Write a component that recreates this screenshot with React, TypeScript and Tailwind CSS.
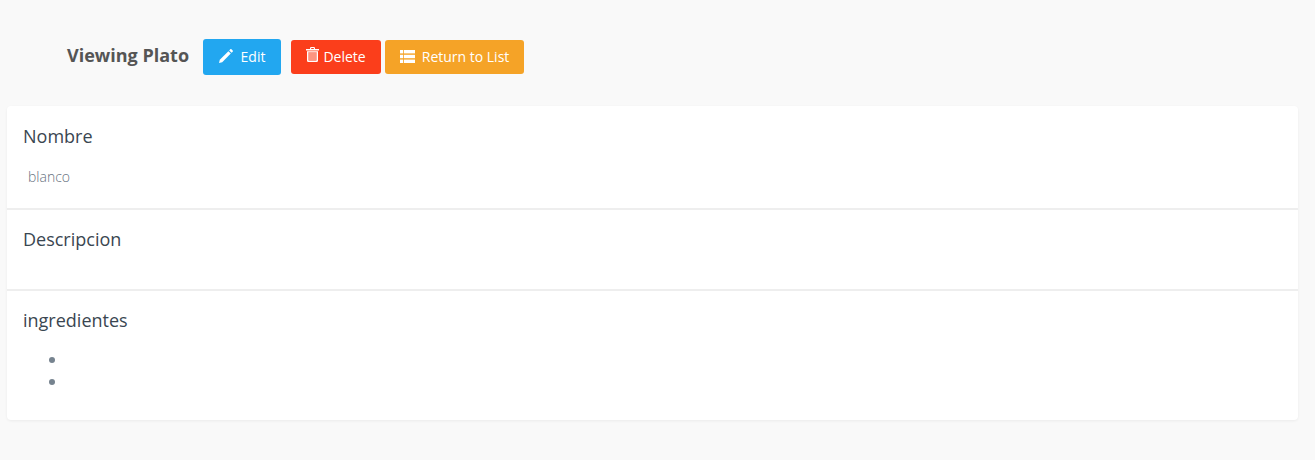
function PencilIcon() {
  return (
    <svg width="16" height="16" viewBox="0 0 16 16" fill="currentColor" className="mr-[7px] -ml-[1px]">
      <path d="M1 15 L1.8 11.8 L10.4 3.2 L12.8 5.6 L4.2 14.2 Z" />
      <path d="M11.2 2.4 L12.2 1.3 Q12.9 0.8 13.5 1.3 L14.7 2.5 Q15.2 3.1 14.7 3.8 L13.6 4.8 Z" />
    </svg>
  );
}

function TrashIcon() {
  return (
    <svg width="13" height="15" viewBox="0 0 13 15" fill="currentColor" className="mr-[4px] -mt-[4px]">
      <path d="M4 2 V1.2 Q4 0 5.2 0 H7.8 Q9 0 9 1.2 V2 H13 V3.6 H0 V2 Z M5.2 2 H7.8 V1.1 H5.2 Z" fillRule="evenodd" />
      <path d="M1 4.2 H12 V13.4 Q12 15 10.6 15 H2.4 Q1 15 1 13.4 Z M2.4 5.2 V13 Q2.4 13.7 3 13.7 H10 Q10.6 13.7 10.6 13 V5.2 Z" fillRule="evenodd" />
      <path d="M2.4 5.2 H10.6 V13.7 H2.4 Z" opacity="0.45" />
    </svg>
  );
}

function ListIcon() {
  return (
    <svg width="15" height="13" viewBox="0 0 15 13" fill="currentColor" className="mr-[7px]">
      <rect x="0" y="0" width="3" height="3.4" />
      <rect x="3.8" y="0" width="11.2" height="3.4" />
      <rect x="0" y="4.8" width="3" height="3.4" />
      <rect x="3.8" y="4.8" width="11.2" height="3.4" />
      <rect x="0" y="9.6" width="3" height="3.4" />
      <rect x="3.8" y="9.6" width="11.2" height="3.4" />
    </svg>
  );
}

export default function App() {
  return (
    <div className="h-[460px] w-[1315px] bg-[#f9f9f9] font-['Open_Sans',sans-serif] pt-[39px] pl-[7px] pr-[17px]">
      <div className="flex items-center h-[36px] pl-[60px]">
        <h1 className="text-[18px] font-bold text-[#555] mr-[14px] leading-[32px] -mt-[4px]">Viewing Plato</h1>
        <button className="flex items-center justify-center w-[78px] h-[36px] pb-[2px] rounded-[3px] bg-[#22a7f0] text-white text-[14px] mr-[10px]">
          <PencilIcon />
          Edit
        </button>
        <button className="flex items-center justify-center w-[90px] h-[34px] pb-[2px] rounded-[3px] bg-[#fb3e1b] text-white text-[14px] mr-[4px]">
          <TrashIcon />
          Delete
        </button>
        <button className="flex items-center justify-center w-[139px] h-[34px] pb-[2px] rounded-[3px] bg-[#f5a327] text-white text-[14px]">
          <ListIcon />
          Return to List
        </button>
      </div>
      <div className="mt-[31px] h-[314px] rounded-[4px] bg-white shadow-[0_1px_3px_rgba(0,0,0,0.06)] text-[#3a4651]">
        <section className="h-[104px] border-b-2 border-[#eeeeee] pl-[16px] pt-[17px]">
          <h3 className="text-[18px] leading-[26px]">Nombre</h3>
          <p className="mt-[18px] ml-[5px] text-[14px] leading-[20px] font-light text-[#66727e]">blanco</p>
        </section>
        <section className="h-[81px] border-b-2 border-[#eeeeee] pl-[16px] pt-[16px]">
          <h3 className="text-[18px] leading-[26px]">Descripcion</h3>
        </section>
        <section className="pl-[16px] pt-[16px]">
          <h3 className="text-[18px] leading-[26px]">ingredientes</h3>
          <ul className="mt-[15px] ml-[44px] list-disc text-[#76838f] text-[16px] leading-[22px]">
            <li>&nbsp;</li>
            <li>&nbsp;</li>
          </ul>
        </section>
      </div>
    </div>
  );
}
